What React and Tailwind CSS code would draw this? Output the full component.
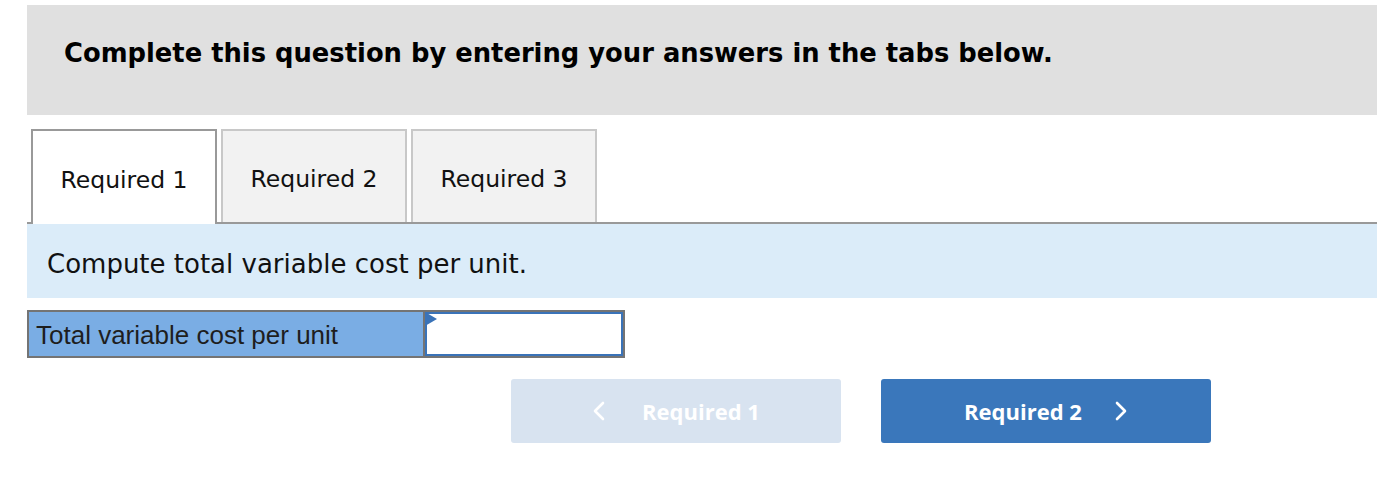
import React from "react";

const Tab = ({ label, active }) => (
  <div
    className={
      active
        ? "w-[186px] h-[95px] -mb-[2px] bg-white border-2 border-b-0 border-[#999] flex items-center justify-center"
        : "w-[186px] h-[93px] bg-[#f2f2f2] border-2 border-b-0 border-[#c8c8c8] flex items-center justify-center"
    }
  >
    <span className="text-[23.5px] text-[#111] pt-[6px]">{label}</span>
  </div>
);

const Chevron = ({ dir }) => (
  <svg width="14" height="20" viewBox="0 0 14 20" fill="none">
    <path
      d={dir === "left" ? "M11 2 L3 10 L11 18" : "M3 2 L11 10 L3 18"}
      stroke="white"
      strokeWidth="2.6"
      strokeLinecap="round"
      strokeLinejoin="round"
    />
  </svg>
);

const App = () => {
  return (
    <div className="min-h-[499px] bg-white pt-[5px] pl-[27px] font-['DejaVu_Sans',Verdana,sans-serif]">
      <div className="h-[110px] bg-[#e0e0e0] pl-[37px] pt-[30px]">
        <h1 className="text-[25.8px] font-bold text-black leading-[36px]">
          Complete this question by entering your answers in the tabs below.
        </h1>
      </div>

      <div className="mt-[14px] flex gap-[4px] pl-[4px] border-b-2 border-[#999]">
        <Tab label="Required 1" active />
        <Tab label="Required 2" />
        <Tab label="Required 3" />
      </div>

      <div className="h-[74px] bg-[#dbecf9] pl-[20px] flex items-center">
        <p className="text-[26px] text-[#111] pt-[6px]">Compute total variable cost per unit.</p>
      </div>

      <div className="mt-[12px] w-[598px] h-[48px] border-2 border-[#747474] flex">
        <div className="w-[396px] bg-[#7aade4] border-r-2 border-[#747474] pl-[7px] flex items-center">
          <span className="font-['Liberation_Sans',Arial,sans-serif] text-[26px] text-[#1e1e1e] pt-[2px]">
            Total variable cost per unit
          </span>
        </div>
        <div className="relative flex-1 bg-white border-2 border-[#3a73b8]">
          <svg className="absolute -left-[2px] -top-[2px]" width="13" height="15" viewBox="0 0 13 15">
            <polygon points="0,0 12,7 0,14" fill="#3a73b8" />
          </svg>
        </div>
      </div>

      <div className="mt-[21px] ml-[484px] flex gap-[40px] font-['Open_Sans',sans-serif]">
        <button className="w-[330px] h-[64px] rounded-[3px] bg-[#d8e3f0] flex items-center justify-center gap-[36px] text-white text-[22px] font-bold">
          <Chevron dir="left" />
          <span>Required 1</span>
        </button>
        <button className="w-[330px] h-[64px] rounded-[3px] bg-[#3a77bb] flex items-center justify-center gap-[32px] text-white text-[22px] font-bold">
          <span>Required 2</span>
          <Chevron dir="right" />
        </button>
      </div>
    </div>
  );
};

export default App;
